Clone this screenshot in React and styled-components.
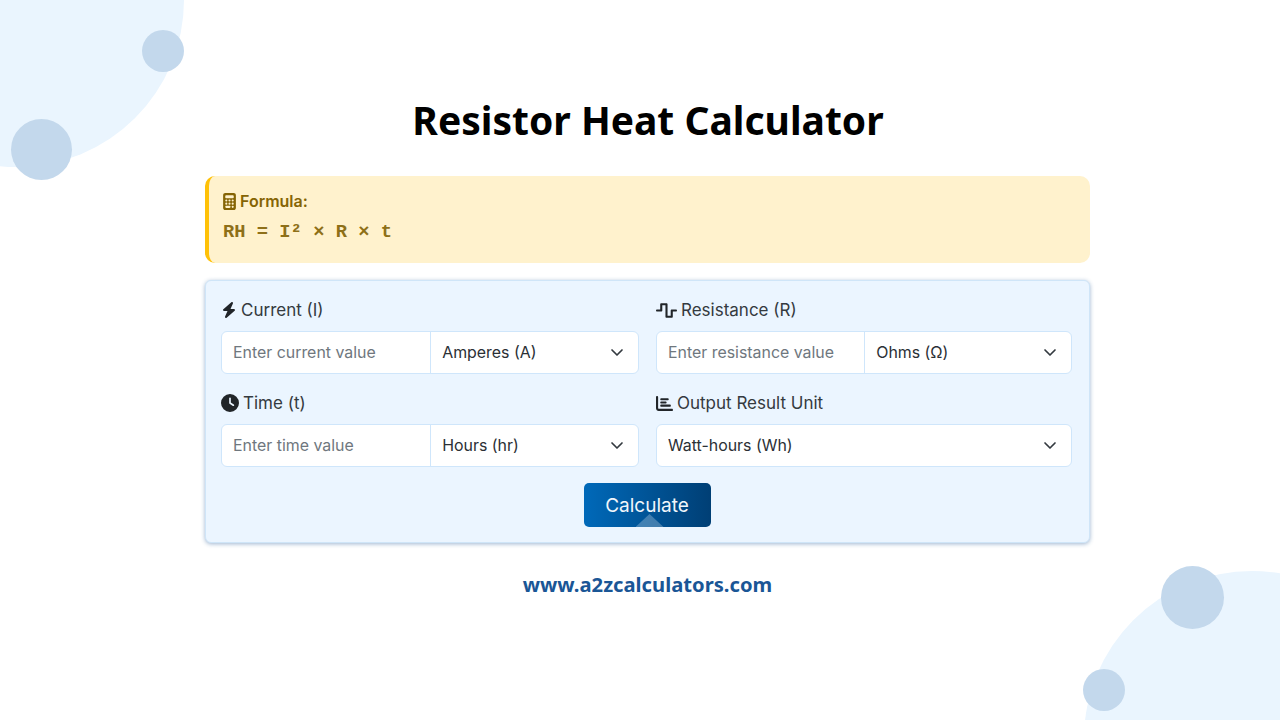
import React from 'react'
import styled, { createGlobalStyle } from 'styled-components'
import { FaBolt, FaClock, FaChartBar, FaCalculator, FaWaveSquare } from 'react-icons/fa6'

const GlobalStyle = createGlobalStyle`
    html, body {
        margin: 0;
        padding: 0;
        background: #fff;
    }
    * {
        box-sizing: border-box;
    }
`

const Page = styled.div`
    position: relative;
    width: 1280px;
    height: 720px;
    overflow: hidden;
    background: #fff;
    font-family: 'Inter', sans-serif;
    padding: 95px 190px 0 205px;
`

const Blob = styled.div`
    position: absolute;
    left: ${(p) => p.$x - p.$r}px;
    top: ${(p) => p.$y - p.$r}px;
    width: ${(p) => p.$r * 2}px;
    height: ${(p) => p.$r * 2}px;
    border-radius: 50%;
    background: ${(p) => p.$color};
`

const Column = styled.main`
    position: relative;
    display: flex;
    flex-direction: column;
`

const Title = styled.h1`
    margin: 0 0 31px;
    padding-left: 1px;
    font-family: 'Noto Sans', sans-serif;
    font-size: 39px;
    line-height: 50px;
    font-weight: 700;
    color: #000;
    text-align: center;
`

const FormulaBox = styled.section`
    height: 87px;
    padding: 15px 14px 0 14px;
    background: #fff2cd;
    border-left: 4px solid #ffc107;
    border-radius: 10px;
    color: #856404;
    margin-bottom: 17px;
`

const FormulaTitle = styled.div`
    display: flex;
    align-items: center;
    gap: 4px;
    font-size: 16px;
    line-height: 20px;
    font-weight: 600;
    svg {
        width: 13px;
        height: 17px;
    }
`

const FormulaText = styled.div`
    margin-top: 11px;
    font-family: 'Liberation Mono', monospace;
    font-size: 18.8px;
    line-height: 20px;
    font-weight: 700;
    color: #8e7018;
    white-space: pre;
`

const Card = styled.section`
    height: 263px;
    padding: 18px 17px 0 15px;
    background: #ebf5ff;
    border: 1px solid #cfe5f8;
    border-radius: 6px;
    box-shadow: 0 1px 4px rgba(40, 90, 150, 0.45);
`

const FieldGrid = styled.div`
    display: grid;
    grid-template-columns: 418px 416px;
    column-gap: 17px;
    row-gap: 18px;
`

const Field = styled.div`
    display: flex;
    flex-direction: column;
    gap: 10px;
`

const Label = styled.label`
    display: flex;
    align-items: center;
    gap: 4px;
    height: 22px;
    font-size: 17px;
    color: #343a40;
    svg {
        color: #212529;
        flex-shrink: 0;
    }
`

const InputGroup = styled.div`
    display: flex;
    height: 43px;
    background: #fff;
    border: 1px solid #cfe6fb;
    border-radius: 6px;
    overflow: hidden;
`

const ValueInput = styled.input`
    width: 50.3%;
    height: 100%;
    padding: 0 11px 1px;
    border: 0;
    border-right: 1px solid #cfe6fb;
    outline: none;
    background: transparent;
    font-family: 'Inter', sans-serif;
    font-size: 15.9px;
    color: #2b3035;
    &::placeholder {
        color: #6f777e;
        opacity: 1;
    }
`

const UnitWrap = styled.div`
    position: relative;
    flex: 1;
`

const UnitSelect = styled.select`
    width: 100%;
    height: 100%;
    padding: 0 11px 1px;
    border: 0;
    outline: none;
    appearance: none;
    background: transparent;
    font-family: 'Inter', sans-serif;
    font-size: 15.9px;
    color: #2b3035;
`

const Chevron = styled.svg`
    position: absolute;
    right: 14px;
    top: 15px;
    width: 14px;
    height: 12px;
    pointer-events: none;
`

const ButtonRow = styled.div`
    display: flex;
    justify-content: center;
    margin-top: 16px;
    padding-left: 1px;
`

const CalcButton = styled.button`
    position: relative;
    width: 127px;
    height: 44px;
    border: 0;
    border-radius: 5px;
    background: linear-gradient(90deg, #0069b9, #003f75);
    color: #f1f6fb;
    font-family: 'Inter', sans-serif;
    font-size: 19px;
    overflow: hidden;
    &::after {
        content: '';
        position: absolute;
        left: 52px;
        bottom: 0;
        width: 28px;
        height: 13px;
        background: rgba(255, 255, 255, 0.26);
        clip-path: polygon(50% 0, 100% 100%, 0 100%);
    }
`

const SiteLink = styled.div`
    margin-top: 27px;
    font-family: 'Noto Sans', sans-serif;
    font-size: 20.2px;
    line-height: 28px;
    font-weight: 700;
    color: #1a5696;
    text-align: center;
`

const ChevronIcon = () => (
    <Chevron viewBox="0 0 14 12" fill="none" stroke="#343a40" strokeWidth="1.7" strokeLinecap="round" strokeLinejoin="round">
        <path d="M2 3l5 5 5-5" />
    </Chevron>
)

const UnitPicker = ({ options }) => (
    <UnitWrap>
        <UnitSelect defaultValue={options[0]}>
            {options.map((o) => (
                <option key={o}>{o}</option>
            ))}
        </UnitSelect>
        <ChevronIcon />
    </UnitWrap>
)

const fields = [
    { label: 'Current (I)', icon: <FaBolt size={16} />, placeholder: 'Enter current value', units: ['Amperes (A)', 'Milliamperes (mA)'] },
    { label: 'Resistance (R)', icon: <FaWaveSquare size={21} />, placeholder: 'Enter resistance value', units: ['Ohms (Ω)', 'Kilohms (kΩ)'] },
    { label: 'Time (t)', icon: <FaClock size={18} />, placeholder: 'Enter time value', units: ['Hours (hr)', 'Minutes (min)', 'Seconds (s)'] },
    { label: 'Output Result Unit', icon: <FaChartBar size={17} />, units: ['Watt-hours (Wh)', 'Joules (J)'] },
]

export default function App() {
    return (
        <>
            <GlobalStyle />
            <Page>
                <Blob $x={17} $y={0} $r={167} $color="#eaf5fe" />
                <Blob $x={41} $y={149} $r={30.5} $color="#c3d8ec" />
                <Blob $x={163} $y={50.5} $r={21} $color="#c3d8ec" />
                <Blob $x={1252} $y={739} $r={168} $color="#eaf5fe" />
                <Blob $x={1192.5} $y={597.5} $r={31.5} $color="#c3d8ec" />
                <Blob $x={1104} $y={690} $r={21} $color="#c3d8ec" />

                <Column>
                    <Title>Resistor Heat Calculator</Title>

                    <FormulaBox>
                        <FormulaTitle>
                            <FaCalculator /> Formula:
                        </FormulaTitle>
                        <FormulaText>RH = I² × R × t</FormulaText>
                    </FormulaBox>

                    <Card>
                        <FieldGrid>
                            {fields.map((f) => (
                                <Field key={f.label}>
                                    <Label>
                                        {f.icon}
                                        {f.label}
                                    </Label>
                                    <InputGroup>
                                        {f.placeholder && <ValueInput placeholder={f.placeholder} />}
                                        <UnitPicker options={f.units} />
                                    </InputGroup>
                                </Field>
                            ))}
                        </FieldGrid>
                        <ButtonRow>
                            <CalcButton>Calculate</CalcButton>
                        </ButtonRow>
                    </Card>

                    <SiteLink>www.a2zcalculators.com</SiteLink>
                </Column>
            </Page>
        </>
    )
}
